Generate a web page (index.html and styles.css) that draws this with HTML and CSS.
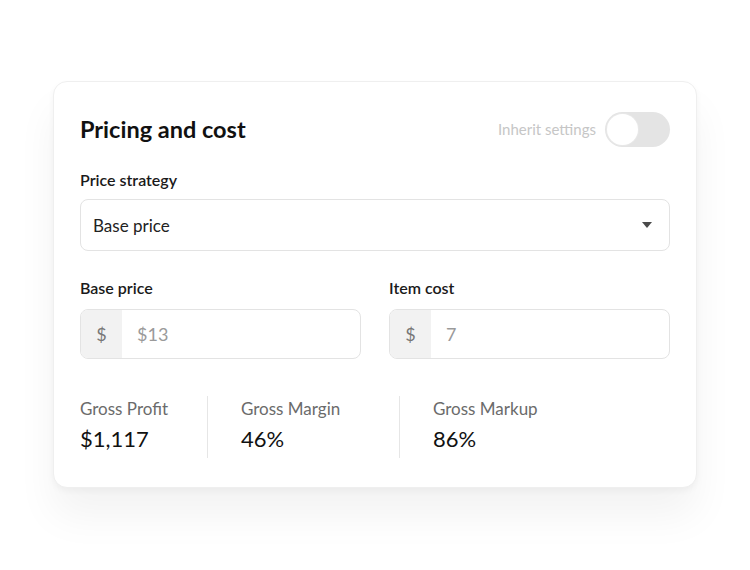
FILE: index.html
```html
<!DOCTYPE html>
<html lang="en">
<head>
    <meta charset="UTF-8">
    <meta name="viewport" content="width=device-width, initial-scale=1.0">
    <title>Pricing and cost</title>
    <link rel="stylesheet" href="styles.css">
</head>
<body>
    <div class="card">
        <div class="card-header">
            <h1>Pricing and cost</h1>
            <label class="inherit">
                <span>Inherit settings</span>
                <span class="toggle"><span class="knob"></span></span>
            </label>
        </div>

        <div class="field">
            <div class="field-label">Price strategy</div>
            <div class="select">
                <span>Base price</span>
                <svg class="caret" width="10" height="6" viewBox="0 0 10 6"><path d="M0 0h10L5 6z" fill="#4a4a4a"/></svg>
            </div>
        </div>

        <div class="row">
            <div class="field">
                <div class="field-label">Base price</div>
                <div class="input-group">
                    <span class="prefix">$</span>
                    <span class="value">$13</span>
                </div>
            </div>
            <div class="field">
                <div class="field-label">Item cost</div>
                <div class="input-group">
                    <span class="prefix">$</span>
                    <span class="value">7</span>
                </div>
            </div>
        </div>

        <div class="stats">
            <div class="stat stat-profit">
                <div class="stat-label">Gross Profit</div>
                <div class="stat-value">$1,117</div>
            </div>
            <div class="stat stat-margin">
                <div class="stat-label">Gross Margin</div>
                <div class="stat-value">46%</div>
            </div>
            <div class="stat">
                <div class="stat-label">Gross Markup</div>
                <div class="stat-value">86%</div>
            </div>
        </div>
    </div>
</body>
</html>
```

FILE: styles.css
```css
html {
    background-color: #ffffff;
}
body {
    box-sizing: border-box;
    min-height: 570px;
    margin: 0;
    padding: 81px 0 0 53px;
    font-family: Lato, "Noto Sans", sans-serif;
    color: #1a1a1a;
}
.card {
    box-sizing: border-box;
    width: 644px;
    height: 407px;
    padding: 26px 26px 0 26px;
    background-color: white;
    border: 1px solid #efefef;
    border-radius: 14px;
    box-shadow: 0 28px 40px rgba(0, 0, 0, 0.05), 0 3px 6px rgba(0, 0, 0, 0.04);
}
.card-header {
    display: flex;
    align-items: center;
    justify-content: space-between;
    height: 48px;
    margin-top: -3px;
}
h1 {
    margin: 0;
    font-size: 23.5px;
    font-weight: 700;
    color: #111;
}
.inherit {
    display: flex;
    align-items: center;
    gap: 9px;
    font-size: 15px;
    color: #c6c6c6;
}
.toggle {
    width: 65px;
    height: 35px;
    border-radius: 18px;
    background-color: #e4e4e4;
    padding: 2px;
    box-sizing: border-box;
}
.knob {
    display: block;
    width: 31px;
    height: 31px;
    border-radius: 50%;
    background-color: white;
    box-shadow: 0 0 0 1px #e8e8e8;
}
.field {
    margin-top: 17px;
}
.field-label {
    font-size: 16px;
    font-weight: 600;
    color: #1a1a1a;
    margin-bottom: 10px;
}
.select {
    display: flex;
    align-items: center;
    justify-content: space-between;
    height: 52px;
    box-sizing: border-box;
    padding: 0 17px 0 12px;
    border: 1px solid #e3e3e3;
    border-radius: 8px;
    font-size: 17px;
    color: #222;
}
.row {
    display: grid;
    grid-template-columns: 1fr 1fr;
    gap: 28px;
    margin-top: 16px;
}
.row .field {
    margin-top: 11px;
}
.row .field-label {
    margin-bottom: 12px;
}
.input-group {
    display: flex;
    height: 50px;
    box-sizing: border-box;
    border: 1px solid #e3e3e3;
    border-radius: 8px;
    overflow: hidden;
    font-size: 18px;
}
.prefix {
    width: 41px;
    display: flex;
    align-items: center;
    justify-content: center;
    background-color: #f2f2f2;
    color: #777;
}
.value {
    display: flex;
    align-items: center;
    padding-left: 15px;
    color: #9a9a9a;
}
.stats {
    display: flex;
    margin-top: 37px;
}
.stat {
    height: 62px;
    padding-left: 33px;
}
.stat-profit {
    width: 127px;
    padding-left: 0;
    border-right: 1px solid #e6e6e6;
}
.stat-margin {
    width: 158px;
    border-right: 1px solid #e6e6e6;
}
.stat-label {
    font-size: 17px;
    font-weight: 400;
    color: #6b6b6b;
    margin-top: 2px;
}
.stat-value {
    font-size: 22px;
    color: #111;
    margin-top: 6px;
}
```
